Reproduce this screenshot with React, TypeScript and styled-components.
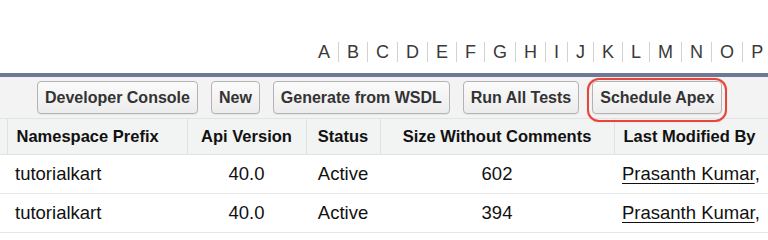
import styled, { createGlobalStyle } from 'styled-components';

const GlobalStyle = createGlobalStyle`
	html, body {
		margin: 0;
		padding: 0;
		background: #ffffff;
		font-family: 'Liberation Sans', Arial, sans-serif;
		overflow: hidden;
	}
`;

const Page = styled.div`
	width: 768px;
	height: 236px;
	overflow: hidden;
	background: #ffffff;
`;

const AlphaBar = styled.ul`
	display: flex;
	margin: 0;
	padding: 42px 0 0 310px;
	height: 31px;
	list-style: none;
	white-space: nowrap;
	overflow: hidden;
`;

const Letter = styled.li`
	padding: 0 8px;
	height: 20px;
	line-height: 20px;
	font-size: 18px;
	color: #3a3a3a;
	border-right: 1px solid #d2d2d2;
`;

const Toolbar = styled.div`
	display: flex;
	align-items: center;
	gap: 13px;
	height: 41px;
	padding: 0 0 0 37px;
	background: #f3f3f3;
	border-top: 4px solid #6f7894;
	border-bottom: 1px solid #e3e3e3;
`;

const Highlight = styled.span`
	position: relative;
	display: inline-flex;

	&::after {
		content: '';
		position: absolute;
		left: -5px;
		right: -5px;
		top: -3px;
		bottom: -8px;
		border: 2px solid #e8453a;
		border-radius: 12px;
		box-shadow: 0 0 1px rgba(232, 69, 58, 0.6);
		pointer-events: none;
	}
`;

const Button = styled.button`
	height: 33px;
	padding: 0 7px;
	font-family: 'Liberation Sans', Arial, sans-serif;
	font-size: 16px;
	font-weight: 700;
	color: #333333;
	background: linear-gradient(#fbfbfb, #ececec);
	border: 1px solid #b3b3b3;
	border-radius: 4px;
	box-shadow: 0 1px 0 rgba(0, 0, 0, 0.05);
	white-space: nowrap;
`;

const Table = styled.table`
	width: 914px;
	table-layout: fixed;
	border-collapse: collapse;
`;

const HeadCell = styled.th<{ $align?: string }>`
	height: 35px;
	padding: 0 9px;
	background: #f2f3f3;
	border-left: 1px solid #dfe1e2;
	border-bottom: 1px solid #e2e3e4;
	font-size: 16.5px;
	font-weight: 700;
	color: #111111;
	text-align: ${p => p.$align || 'left'};
	white-space: nowrap;

	&:first-child {
		border-left: none;
		padding: 0;
	}
`;

const Cell = styled.td<{ $align?: string }>`
	height: 38px;
	padding: 0 8px;
	border-bottom: 1px solid #e6e6e6;
	font-size: 18.5px;
	color: #111111;
	text-align: ${p => p.$align || 'left'};
	white-space: nowrap;
	overflow: hidden;

	&:first-child {
		padding: 0;
	}

	a {
		color: #111111;
		text-decoration: underline;
		text-underline-offset: 3px;
	}
`;

// only the letters that fit in the visible strip
const letters = 'ABCDEFGHIJKLMNOP'.split('');

const buttons = ['Developer Console', 'New', 'Generate from WSDL', 'Run All Tests'];

const rows = [
	{ prefix: 'tutorialkart', version: '40.0', status: 'Active', size: '602' },
	{ prefix: 'tutorialkart', version: '40.0', status: 'Active', size: '394' },
];

function App() {
	return (
		<Page>
			<GlobalStyle />
			<AlphaBar>
				{letters.map(l => (
					<Letter key={l}>{l}</Letter>
				))}
			</AlphaBar>
			<Toolbar>
				{buttons.map(b => (
					<Button key={b} type='button'>
						{b}
					</Button>
				))}
				<Highlight>
					<Button type='button'>Schedule Apex</Button>
				</Highlight>
			</Toolbar>
			<Table>
				<colgroup>
					<col style={{ width: 7 }} />
					<col style={{ width: 180 }} />
					<col style={{ width: 119 }} />
					<col style={{ width: 74 }} />
					<col style={{ width: 234 }} />
					<col style={{ width: 300 }} />
				</colgroup>
				<thead>
					<tr>
						<HeadCell />
						<HeadCell>Namespace Prefix</HeadCell>
						<HeadCell $align='center'>Api Version</HeadCell>
						<HeadCell $align='center'>Status</HeadCell>
						<HeadCell $align='center'>Size Without Comments</HeadCell>
						<HeadCell>Last Modified By</HeadCell>
					</tr>
				</thead>
				<tbody>
					{rows.map((r, i) => (
						<tr key={i}>
							<Cell />
							<Cell>{r.prefix}</Cell>
							<Cell $align='center'>{r.version}</Cell>
							<Cell $align='center'>{r.status}</Cell>
							<Cell $align='center'>{r.size}</Cell>
							<Cell>
								<a href='#'>Prasanth Kumar</a>,
							</Cell>
						</tr>
					))}
				</tbody>
			</Table>
		</Page>
	);
}

export default App;
